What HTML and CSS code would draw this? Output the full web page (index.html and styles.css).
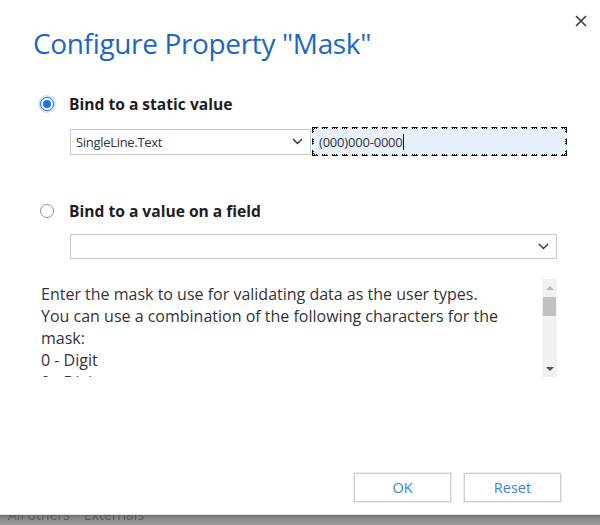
FILE: index.html
```html
<!DOCTYPE html>
<html>
<head>
<meta charset="utf-8">
<link rel="stylesheet" href="styles.css">
</head>
<body>
<div class="dialog">
  <button class="close" aria-label="Close">
    <svg width="12" height="12" viewBox="0 0 12 12"><path d="M1 1 L11 11 M11 1 L1 11" stroke="#3a3a3a" stroke-width="1.6" fill="none"/></svg>
  </button>
  <h1 class="title">Configure Property "Mask"</h1>

  <div class="option opt1">
    <span class="radio checked"><span class="dot"></span></span>
    <span class="label">Bind to a static value</span>
  </div>
  <div class="controls">
    <div class="select sel1">
      <span class="sel-text">SingleLine.Text</span>
      <svg class="chev" width="11" height="7" viewBox="0 0 11 7"><path d="M1 1 L5.5 5.5 L10 1" stroke="#333" stroke-width="1.4" fill="none"/></svg>
    </div>
    <div class="textbox"><span class="val">(000)000-0000</span><span class="caret"></span></div>
  </div>

  <div class="option opt2">
    <span class="radio"></span>
    <span class="label">Bind to a value on a field</span>
  </div>
  <div class="controls">
    <div class="select sel2">
      <span class="sel-text"></span>
      <svg class="chev" width="11" height="7" viewBox="0 0 11 7"><path d="M1 1 L5.5 5.5 L10 1" stroke="#333" stroke-width="1.4" fill="none"/></svg>
    </div>
  </div>

  <div class="desc">
    <div class="desc-text">
      <p>Enter the mask to use for validating data as the user types.</p>
      <p>You can use a combination of the following characters for the mask:</p>
      <p>0 - Digit</p>
      <p>9 - Digit or space</p>
    </div>
    <div class="scrollbar">
      <span class="arrow up"></span>
      <span class="thumb"></span>
      <span class="arrow down"></span>
    </div>
  </div>

  <div class="footer">
    <button class="btn">OK</button>
    <button class="btn">Reset</button>
  </div>
</div>
<div class="backdrop">
  <span>All others</span><span class="sep">Externals</span>
</div>
</body>
</html>
```

FILE: styles.css
```css
html, body {
  margin: 0;
  padding: 0;
  background: #fff;
}
body {
  width: 600px;
  height: 525px;
  overflow: hidden;
  font-family: "Open Sans", "Noto Sans", sans-serif;
  color: #262626;
}
.dialog {
  position: relative;
  height: 514px;
  border-bottom: 1px solid #e4e4e4;
  background: #fff;
  overflow: hidden;
}
.close {
  position: absolute;
  top: 15px;
  left: 575px;
  width: 12px;
  height: 12px;
  padding: 0;
  border: 0;
  background: none;
  display: flex;
}
.title {
  margin: 0;
  padding: 23px 0 0 33px;
  font-size: 28px;
  line-height: 40px;
  font-weight: 400;
  color: #1c67c3;
  letter-spacing: -0.35px;
}
.option {
  display: flex;
  align-items: center;
  padding-left: 40px;
  height: 20px;
}
.opt1 { margin-top: 31px; }
.opt2 { margin-top: 45px; }
.label {
  margin-left: 15px;
  font-size: 15.6px;
  font-weight: 700;
  color: #1e1e1e;
}
.radio {
  width: 14px;
  height: 14px;
  box-sizing: border-box;
  border-radius: 50%;
  border: 1px solid #8f8f8f;
  display: flex;
  align-items: center;
  justify-content: center;
  background: #fff;
}
.radio.checked {
  border-color: #1a73e8;
  box-shadow: 0 0 0 2px #cfe2fb;
}
.radio .dot {
  width: 8px;
  height: 8px;
  border-radius: 50%;
  background: #1a73e8;
}
.controls {
  display: flex;
  align-items: center;
  padding-left: 70px;
  margin-top: 13px;
}
.select {
  box-sizing: border-box;
  display: flex;
  align-items: center;
  justify-content: space-between;
  border: 1px solid #c8c8c8;
  background: #fff;
  padding: 0 7px 0 5px;
}
.sel1 {
  width: 241px;
  height: 26px;
}
.sel2 {
  width: 487px;
  height: 25px;
}
.sel-text {
  font-size: 13px;
  color: #333;
  letter-spacing: -0.3px;
}
.textbox {
  box-sizing: border-box;
  margin-left: 1px;
  width: 255px;
  height: 29px;
  border: 2px dashed #111;
  outline: 1px dotted #fff;
  outline-offset: -2px;
  background: #e8f0fc;
  display: flex;
  align-items: center;
  padding-left: 5px;
}
.val {
  font-size: 13px;
  color: #333;
  letter-spacing: -0.2px;
}
.caret {
  width: 1px;
  height: 16px;
  background: #111;
}
.desc {
  margin: 20px 0 0 41px;
  width: 516px;
  height: 98px;
  display: flex;
  justify-content: space-between;
  overflow: hidden;
}
.desc-text {
  width: 470px;
  font-size: 16px;
  line-height: 22px;
  color: #333;
  padding-top: 4px;
}
.desc-text p { margin: 0; }
.scrollbar {
  width: 15px;
  height: 98px;
  background: #f1f1f1;
  display: flex;
  flex-direction: column;
  align-items: center;
}
.thumb {
  margin-top: 7px;
  width: 13px;
  height: 19px;
  background: #c1c1c1;
}
.arrow {
  width: 0;
  height: 0;
  border-left: 4px solid transparent;
  border-right: 4px solid transparent;
}
.arrow.up {
  margin-top: 7px;
  border-bottom: 4px solid #b8b8b8;
}
.arrow.down {
  margin-top: auto;
  margin-bottom: 6px;
  border-top: 4px solid #505050;
}
.footer {
  display: flex;
  justify-content: flex-end;
  gap: 13px;
  padding-right: 39px;
  margin-top: 96px;
}
.btn {
  box-sizing: border-box;
  width: 97px;
  height: 29px;
  border: 1px solid #cfcfcf;
  box-shadow: 0 0 0 1px #ececec;
  background: #fff;
  font-family: "Open Sans", "Noto Sans", sans-serif;
  font-size: 14.5px;
  color: #3a84d6;
  padding: 0;
}
.backdrop {
  height: 10px;
  background: linear-gradient(#6f6f6f, #8c8c8c 40%, #9a9a9a);
  overflow: hidden;
  font-family: "Open Sans", sans-serif;
  font-size: 14px;
  line-height: 14px;
  color: #5c5c5c;
  padding-left: 8px;
  filter: blur(0.6px);
}
.backdrop span { position: relative; top: -7px; }
.backdrop .sep { margin-left: 14px; }
```
